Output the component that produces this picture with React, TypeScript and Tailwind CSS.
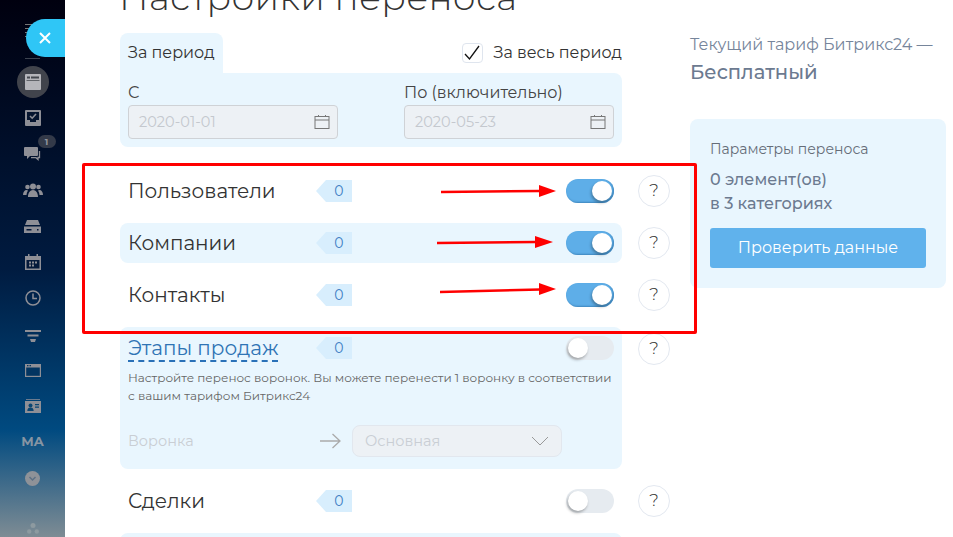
const font = 'font-["Montserrat","Inter","Open_Sans",sans-serif]';

function Toggle({ on }: { on?: boolean }) {
  return (
    <div className={`flex h-6 w-12 rounded-full p-0.5 ${on ? "justify-end bg-[#5eaee8] shadow-[inset_-1px_-1px_2px_#3f86bd]" : "justify-start bg-[#e6ebf0]"}`}>
      <div className="h-5 w-5 rounded-full bg-white shadow-[-1px_2px_3px_rgba(0,0,0,0.3)]" />
    </div>
  );
}

function Help() {
  return (
    <div className="flex h-[32px] w-[32px] shrink-0 items-center justify-center rounded-full border border-[#e3e8f0] bg-white text-[17px] font-light text-[#333]">
      ?
    </div>
  );
}

function Count() {
  return (
    <div className="flex h-[22px] w-9 items-center">
      <svg width="10" height="22" viewBox="0 0 10 22" className="shrink-0">
        <polygon points="10,0 10,22 0,11" fill="#d8eefd" />
      </svg>
      <div className="flex h-[22px] flex-1 items-center justify-center bg-[#d8eefd] text-[14px] text-[#3f7fc4]">0</div>
    </div>
  );
}

function Row({ label, on, tinted }: { label: string; on?: boolean; tinted?: boolean }) {
  return (
    <div className="flex w-[550px] items-center gap-4">
      <div className={`flex h-10 w-[502px] items-center rounded-lg px-2 ${tinted ? "bg-[#e9f6fe]" : ""}`}>
        <div className="w-[188px] text-[20px] leading-6 text-[#333]">{label}</div>
        <Count />
        <div className="ml-auto">
          <Toggle on={on} />
        </div>
      </div>
      <Help />
    </div>
  );
}

function DateField({ label, value, width }: { label: string; value: string; width: string }) {
  return (
    <div className={width}>
      <div className="text-[16px] leading-6 text-[#444]">{label}</div>
      <div className="flex h-[34px] items-center justify-between rounded border border-[#cfd2d6] bg-[#edf1f5] pr-[7px] pl-2.5 text-[14.5px] text-[#c4c8ce]">
        <span className="pt-0.5">{value}</span>
        <svg width="16" height="16" viewBox="0 0 16 16" fill="none" stroke="#777" strokeWidth="1">
          <rect x="1" y="2.5" width="14" height="12" />
          <path d="M1 6h14M4.5 1v2M11.5 1v2" />
        </svg>
      </div>
    </div>
  );
}

const iconFill = "#8e8f96";

const sidebarIcons = [
  <svg width="18" height="18" viewBox="0 0 18 18" key="a"><path fill="#b5b5ba" d="M2 1h14a1 1 0 0 1 1 1v14a1 1 0 0 1-1 1H2a1 1 0 0 1-1-1V2a1 1 0 0 1 1-1z" /><path fill="#45484f" d="M3 3.5h3v2H3zM7 3.5h8v2H7zM2.500 7h13v.8h-13z" /></svg>,
  <svg width="16" height="16" viewBox="0 0 16 16" key="b"><path fill={iconFill} d="M1 0h14a1 1 0 0 1 1 1v14a1 1 0 0 1-1 1H1a1 1 0 0 1-1-1V1a1 1 0 0 1 1-1z" /><path fill="#06152f" d="M2 2h12v8h-3v2H5v-2H2z" /><path fill="none" stroke={iconFill} strokeWidth="1.6" d="M5 6l2.200 2.200L11 4" /></svg>,
  <svg width="18" height="16" viewBox="0 0 18 16" key="c"><path fill={iconFill} d="M1 1h12a1 1 0 0 1 1 1v7a1 1 0 0 1-1 1H6l-3 3v-3H1a1 1 0 0 1-1-1V2a1 1 0 0 1 1-1z" /><path fill="none" stroke={iconFill} strokeWidth="1.300" d="M15.500 5v6.500H14v2l-2-1.800H7" /></svg>,
  <svg width="20" height="14" viewBox="0 0 20 14" key="d"><circle cx="10" cy="3.500" r="3" fill={iconFill} /><circle cx="4.500" cy="4" r="2.300" fill={iconFill} /><circle cx="15.500" cy="4" r="2.300" fill={iconFill} /><path fill={iconFill} d="M5 14c0-4 2-7 5-7s5 3 5 7zM0 12c0-3 1.500-5 3.500-5 .6 0 1 .2 1.500.5C4 9 3.500 10.500 3.500 12zM20 12c0-3-1.500-5-3.500-5-.6 0-1 .2-1.500.5 1 1.500 1.500 3 1.500 4.500z" /></svg>,
  <svg width="17" height="13" viewBox="0 0 17 13" key="e"><path fill={iconFill} d="M3 0h11l2 5H1zM0 6.500h17V13H0z" /><path fill="#04193a" d="M2.500 9h5v1.500h-5zM13 9h1.500v1.500H13z" /></svg>,
  <svg width="16" height="16" viewBox="0 0 16 16" key="f"><path fill={iconFill} d="M0 2h3V0h1.500v2h7V0H13v2h3v14H0z" /><path fill="#04193a" d="M1.500 6h13v8.500h-13z" /><path fill={iconFill} d="M4 7.500h2v2H4zM7 7.500h2v2H7zM10 7.500h2v2h-2zM4 10.500h2v2H4zM7 10.500h2v2H7z" /></svg>,
  <svg width="16" height="16" viewBox="0 0 16 16" fill="none" stroke={iconFill} key="g"><circle cx="8" cy="8" r="7" strokeWidth="1.500" /><path strokeWidth="1.500" d="M8 3.500V8.500H12" /></svg>,
  <svg width="16" height="13" viewBox="0 0 16 13" className="mt-1" key="h"><path fill={iconFill} d="M0 0h16v2H0zM2.500 4.500h11v2h-11zM5 9h6l-1 3H6z" /></svg>,
  <svg width="16" height="13" viewBox="0 0 16 13" key="i"><path fill={iconFill} d="M0 0h16v13H0z" /><path fill="#033561" d="M1.200 3.500h13.600v8.300H1.200z" /><path fill="#033561" d="M2 1h1.500v1.300H2zM4.500 1H6v1.300H4.500z" /></svg>,
  <svg width="16" height="14" viewBox="0 0 16 14" key="j"><path fill={iconFill} d="M1 0h14v.8H1zM0 2h16v12H0z" /><circle cx="5.500" cy="6.500" r="2" fill="#0b4672" /><path fill="#0b4672" d="M2.300 12c0-2.500 1.400-3.500 3.200-3.500s3.200 1 3.200 3.500zM10 5h4v1.200h-4zM10 7.500h4v1.200h-4z" /></svg>,
];

function Sidebar() {
  return (
    <aside className="relative flex h-full w-[65px] shrink-0 flex-col items-center bg-[linear-gradient(180deg,#00000f_0%,#001b40_50%,#004a80_80%,#7e8c94_100%)]">
      <div className="mt-6 flex h-[34px] w-[15px] flex-col gap-[3px]">
        <div className="h-px w-[15px] bg-[#777]" />
        <div className="h-px w-[15px] bg-[#777]" />
        <div className="h-px w-[15px] bg-[#777]" />
        <div className="h-px w-[15px] bg-[#777]" />
      </div>
      <div className="h-px w-[15px] bg-[#3d4350]" />
      <div className="mt-[5px] flex flex-col items-center">
        {sidebarIcons.map((icon, i) => (
          <div key={i} className={`relative flex w-8 items-center justify-center ${i === 0 ? "mt-0.5 mb-0.5 h-8 rounded-full bg-[#41444c]" : "h-9"}`}>
            {icon}
            {i === 2 && (
              <span className="absolute top-[-1px] left-[21px] flex h-[13px] w-[18px] items-center justify-center rounded-full bg-[#333a49] text-[9px] font-bold text-[#8f939b]">1</span>
            )}
          </div>
        ))}
        <div className="flex h-9 w-8 items-center justify-center text-[13px] font-bold text-[#8795a3]">MA</div>
        <div className="flex h-9 w-8 items-center justify-center">
          <svg width="15" height="15" viewBox="0 0 15 15"><circle cx="7.500" cy="7.500" r="7.500" fill="#8e9298" /><path d="M4.500 6l3 3 3-3" fill="none" stroke="#5d7185" strokeWidth="1.500" /></svg>
        </div>
        <div className="mt-[27px]">
          <svg width="12" height="11" viewBox="0 0 12 11"><g fill="#8d9aa0"><circle cx="6" cy="2.500" r="2.500" /><circle cx="2.200" cy="8.500" r="2.200" /><circle cx="9.800" cy="8.500" r="2.200" /></g></svg>
        </div>
      </div>
      <div className="absolute top-[19px] left-[26px] flex h-[38px] w-[39px] items-center justify-center rounded-l-full bg-[#2fc6f6] pr-[1px]">
        <svg width="12" height="12" viewBox="0 0 12 12" stroke="white" strokeWidth="2"><path d="M1 1l10 10M11 1L1 11" /></svg>
      </div>
    </aside>
  );
}

export default function App() {
  return (
    <div className={`relative flex h-screen w-full overflow-hidden bg-white ${font}`}>
      <Sidebar />
      <main className="flex flex-1 pl-[55px]">
        <div className="w-[570px] shrink-0">
          <h1 className="mt-[-28px] ml-[-1px] h-[61px] text-[36px] leading-[50px] font-light tracking-[0.3px] whitespace-nowrap text-[#333]">
            Настройки переноса
          </h1>
          <div className="flex h-10 w-[502px] items-center">
            <div className="flex h-10 w-[103px] items-center rounded-t-lg bg-[#e9f6fe] px-2 text-[16px] whitespace-nowrap text-[#333]">
              За период
            </div>
            <div className="ml-auto flex items-center gap-[11px]">
              <div className="flex h-5 w-[21px] items-center justify-center rounded border border-[#dfe5ee]">
                <svg width="18" height="16" viewBox="0 0 18 16" fill="none" stroke="#111" strokeWidth="1.300"><path d="M2 9l4.500 5L16 1" /></svg>
              </div>
              <span className="text-[16px] text-[#333]">За весь период</span>
            </div>
          </div>
          <div className="flex h-[74px] w-[502px] justify-between rounded-b-lg rounded-tr-lg bg-[#e9f6fe] px-2 pt-2">
            <DateField label="С" value="2020-01-01" width="w-[210px]" />
            <DateField label="По (включительно)" value="2020-05-23" width="w-[210px]" />
          </div>
          <div className="mt-6 flex flex-col gap-3">
            <Row label="Пользователи" on />
            <Row label="Компании" on tinted />
            <Row label="Контакты" on />
            <div className="flex w-[550px] items-start gap-4">
              <div className="h-[142px] w-[502px] rounded-lg bg-[#e9f6fe] px-2 pt-px">
                <div className="flex h-10 items-center">
                  <div className="w-[188px] text-[20px] leading-6">
                    <span className="border-b-2 border-dashed border-[#2a71b8] text-[#2f74b5]">Этапы продаж</span>
                  </div>
                  <Count />
                  <div className="ml-auto">
                    <Toggle />
                  </div>
                </div>
                <p className="mt-px text-[12px] leading-[18px] text-[#666]">
                  Настройте перенос воронок. Вы можете перенести 1 воронку в соответствии с вашим тарифом Битрикс24
                </p>
                <div className="mt-5 flex items-center">
                  <div className="w-[191px] pt-0.5 text-[14.5px] text-[#c9ced4]">Воронка</div>
                  <svg width="22" height="16" viewBox="0 0 22 16" fill="none" stroke="#aaa" strokeWidth="1.300"><path d="M1 8h20M13.500 1l7.500 7-7.500 7" /></svg>
                  <div className="ml-[11px] flex h-8 w-[210px] items-center justify-between rounded-lg border border-[#e2e7ee] bg-[#edf1f5] pr-3 pl-3 text-[14.5px] text-[#c9ced4]">
                    <span className="pt-0.5">Основная</span>
                    <svg width="18" height="10" viewBox="0 0 18 10" fill="none" stroke="#999" strokeWidth="1"><path d="M1 1l8 8 8-8" /></svg>
                  </div>
                </div>
              </div>
              <div className="mt-1.5">
                <Help />
              </div>
            </div>
            <Row label="Сделки" />
            <div className="h-10 w-[502px] rounded-lg bg-[#e9f6fe]" />
          </div>
        </div>
        <div className="w-[256px] shrink-0 pt-[33px]">
          <div className="text-[16px] leading-6 text-[#76859b]">Текущий тариф Битрикс24 —</div>
          <div className="mt-[3px] text-[19.6px] leading-6 font-medium text-[#6c7a90]">Бесплатный</div>
          <div className="mt-[35px] h-[169px] rounded-lg bg-[#e9f6fe] px-5 pt-5">
            <div className="text-[14px] leading-5 text-[#666d78]">Параметры переноса</div>
            <div className="mt-[9px] text-[16px] leading-6 font-medium text-[#6c7a90]">
              0 элемент(ов)
              <br />в 3 категориях
            </div>
            <div className="mt-3 flex h-10 items-center justify-center rounded-[3px] bg-[#60b2ec] text-[16px] text-white">
              Проверить данные
            </div>
          </div>
        </div>
      </main>

      {/* annotation drawn on top of the screenshot */}
      <div className="pointer-events-none absolute top-[163px] left-[82px] h-[171px] w-[615px] rounded-[2px] border-[3px] border-[#f00]" />
      <svg className="pointer-events-none absolute top-0 left-0" width="953" height="537">
        <g fill="#f00" stroke="#f00" strokeWidth="2.500">
          <path d="M441 192L540 191" />
          <path d="M437 243L536 242" />
          <path d="M440 292L540 289.500" />
        </g>
        <g fill="#f00">
          <polygon points="539,185 556,191 539,197" />
          <polygon points="535,236 553,242 535,248" />
          <polygon points="539,283 556,289 539,295" />
        </g>
      </svg>
    </div>
  );
}
